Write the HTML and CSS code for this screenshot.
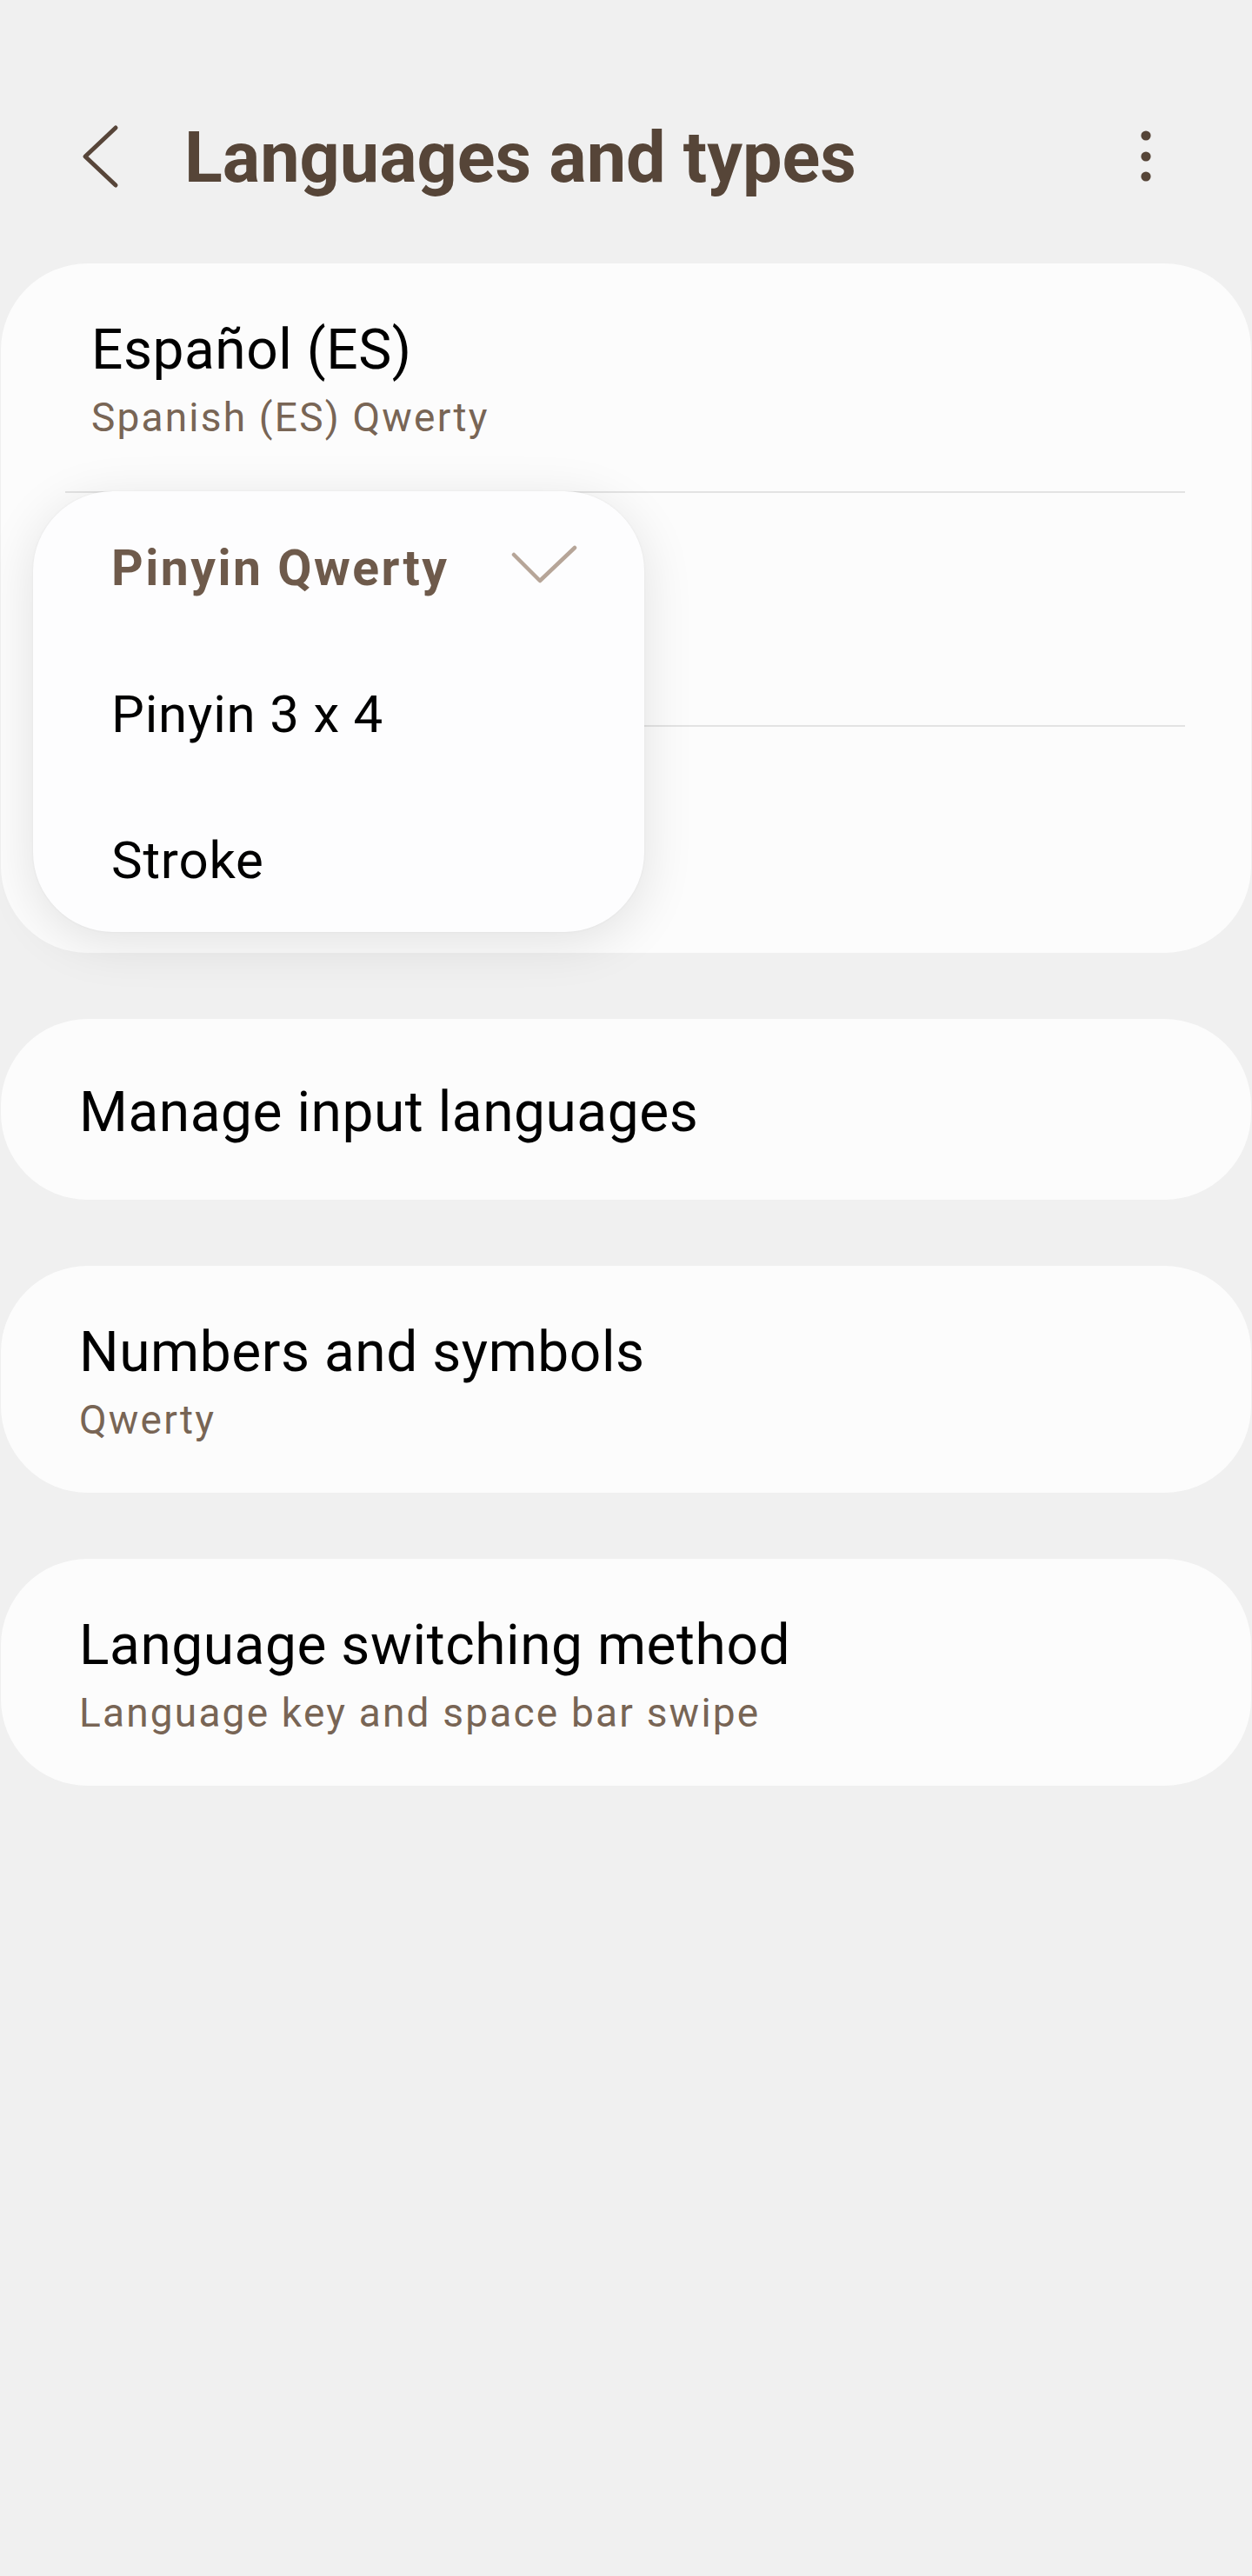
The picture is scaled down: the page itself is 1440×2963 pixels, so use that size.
FILE: index.html
```html
<!DOCTYPE html>
<html lang="en">
<head>
<meta charset="utf-8">
<title>Languages and types</title>
<link rel="stylesheet" href="styles.css">
</head>
<body>
<div class="screen">
  <header class="appbar">
    <button class="icon-btn back" aria-label="Back">
      <svg width="44" height="76" viewBox="0 0 44 76"><polyline points="39,5 4,38 39,71" fill="none" stroke="#574539" stroke-width="5" stroke-linecap="round" stroke-linejoin="round"/></svg>
    </button>
    <h1 class="title">Languages and types</h1>
    <button class="icon-btn more" aria-label="More options">
      <svg width="20" height="70" viewBox="0 0 20 70"><circle cx="10" cy="11" r="5.6" fill="#564538"/><circle cx="10" cy="35" r="5.6" fill="#564538"/><circle cx="10" cy="58" r="5.6" fill="#564538"/></svg>
    </button>
  </header>

  <main class="list">
    <section class="card card-langs">
      <div class="item item-first">
        <div class="item-title">Español (ES)</div>
        <div class="item-sub">Spanish (ES) Qwerty</div>
      </div>
      <div class="divider"></div>
      <div class="item item-mid"></div>
      <div class="divider"></div>
      <div class="item item-last"></div>

      <div class="popup" role="menu">
        <div class="popup-row selected" role="menuitemradio" aria-checked="true">
          <span>Pinyin Qwerty</span>
          <svg class="check" width="76" height="46" viewBox="0 0 76 46"><polyline points="3,11 33,41 73,3" fill="none" stroke="#b6a598" stroke-width="4.5" stroke-linecap="round" stroke-linejoin="round"/></svg>
        </div>
        <div class="popup-row" role="menuitemradio" aria-checked="false"><span>Pinyin 3 x 4</span></div>
        <div class="popup-row" role="menuitemradio" aria-checked="false"><span>Stroke</span></div>
      </div>
    </section>

    <section class="card card-single">
      <div class="item-title">Manage input languages</div>
    </section>

    <section class="card card-double">
      <div class="item-title">Numbers and symbols</div>
      <div class="item-sub">Qwerty</div>
    </section>

    <section class="card card-double">
      <div class="item-title">Language switching method</div>
      <div class="item-sub">Language key and space bar swipe</div>
    </section>
  </main>
</div>
</body>
</html>
```

FILE: styles.css
```css
html, body {
  margin: 0;
  padding: 0;
  background: #f0f0f0;
}

body {
  font-family: Roboto, "Liberation Sans", Arial, sans-serif;
  color: #000;
  min-height: 2963px;
}

.screen {
  width: 1440px;
}

.appbar {
  display: flex;
  align-items: center;
  padding-top: 134px;
  height: 96px;
}

.icon-btn {
  background: none;
  border: 0;
  padding: 0;
  display: flex;
  align-items: center;
  cursor: pointer;
}

.back {
  margin-left: 94px;
  margin-top: -4px;
}

.title {
  margin: 0 0 0 74px;
  font-size: 81px;
  line-height: 96px;
  font-weight: 700;
  color: #564538;
  flex: 1;
  white-space: nowrap;
}

.more {
  margin-right: 112px;
  margin-top: -4px;
}

.list {
  margin-top: 73px;
  display: flex;
  flex-direction: column;
  gap: 76px;
}

.card {
  background: #fcfcfc;
  border-radius: 100px;
  margin: 0 1px;
}

.card-langs {
  position: relative;
}

.item {
  box-sizing: border-box;
}

.item-first {
  height: 262px;
  padding: 64px 0 0 104px;
}

.item-mid {
  height: 267px;
}

.item-last {
  height: 260px;
}

.divider {
  height: 2px;
  margin: 0 76px 0 74px;
  background: #e3e3e3;
}

.item-title {
  font-size: 64px;
  line-height: 72px;
  letter-spacing: 0.55px;
  color: #000;
  white-space: nowrap;
}

.item-sub {
  margin-top: 13px;
  font-size: 46px;
  line-height: 56px;
  letter-spacing: 2.2px;
  color: #786555;
  white-space: nowrap;
}

.card-single {
  box-sizing: border-box;
  height: 208px;
  padding: 72px 0 0 90px;
}

.card-double {
  box-sizing: border-box;
  height: 261px;
  padding: 64px 0 0 90px;
}

.popup {
  position: absolute;
  left: 37px;
  top: 262px;
  width: 703px;
  height: 507px;
  box-sizing: border-box;
  padding-top: 4px;
  background: #fdfdfe;
  border-radius: 92px;
  box-shadow: 0 12px 60px rgba(0, 0, 0, 0.11), 0 0 3px rgba(0, 0, 0, 0.05);
}

.popup-row {
  height: 168px;
  display: flex;
  align-items: center;
  justify-content: space-between;
  padding: 0 77px 0 90px;
  font-size: 60px;
  letter-spacing: 0.8px;
  color: #000;
  white-space: nowrap;
}

.popup-row.selected {
  font-size: 57px;
  letter-spacing: 2.5px;
  font-weight: 700;
  color: #6e5a4b;
}

.check {
  margin-top: -6px;
}
```
